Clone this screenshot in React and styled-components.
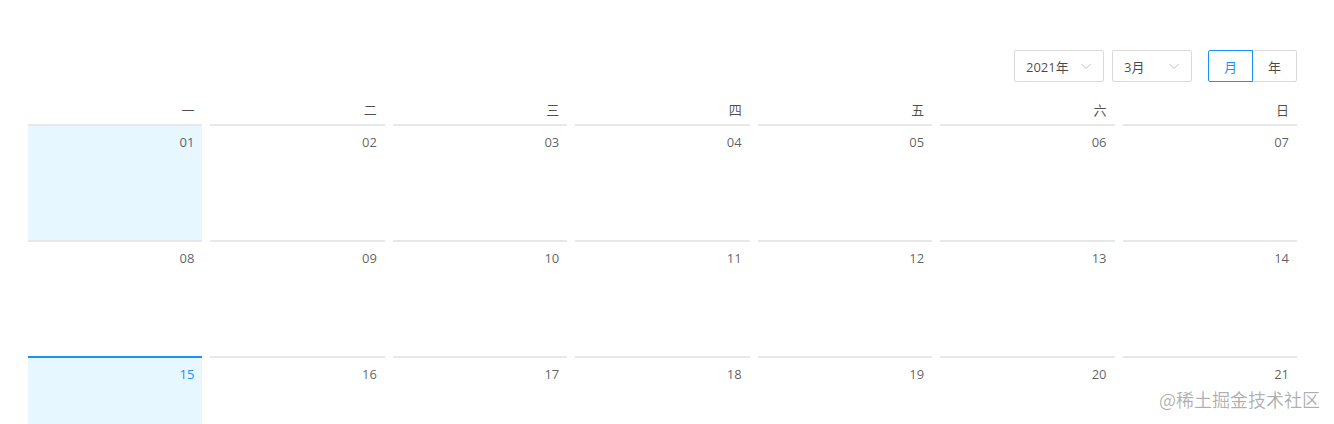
import React from "react";
import styled, { createGlobalStyle } from "styled-components";

const Global = createGlobalStyle`
  html, body { margin: 0; padding: 0; background: #fff; overflow: hidden; }
  body {
    font-family: "Open Sans", "Noto Sans CJK SC", sans-serif;
    font-size: 14px;
    color: rgba(0,0,0,0.85);
  }
`;

const Page = styled.div`
  position: relative;
  height: 424px;
  overflow: hidden;
  padding: 38px 33px 0 24px;
  box-sizing: border-box;
`;

const Header = styled.div`
  display: flex;
  justify-content: flex-end;
  align-items: center;
  padding: 12px 4px 12px 0;
`;

const Select = styled.div`
  box-sizing: border-box;
  width: ${(p) => p.w}px;
  height: 32px;
  margin-left: ${(p) => p.ml || 0}px;
  border: 1px solid #d9d9d9;
  border-radius: 2px;
  display: flex;
  align-items: center;
  justify-content: space-between;
  padding: 0 11px;
  font-size: 13px;
  color: rgba(0,0,0,0.72);
`;

const Arrow = () => (
  <svg width="12" height="12" viewBox="0 0 12 12" fill="none">
    <path d="M1.5 4 L6 8.5 L10.5 4" stroke="#bfbfbf" strokeWidth="1" />
  </svg>
);

const Radio = styled.div`
  display: flex;
  margin-left: 16px;
`;

const RadioBtn = styled.div`
  box-sizing: border-box;
  width: 45px;
  height: 32px;
  display: flex;
  align-items: center;
  justify-content: center;
  font-size: 13px;
  border: 1px solid ${(p) => (p.active ? "#1890ff" : "#d9d9d9")};
  color: ${(p) => (p.active ? "#1890ff" : "rgba(0,0,0,0.72)")};
  border-radius: ${(p) => (p.first ? "2px 0 0 2px" : "0 2px 2px 0")};
  margin-left: ${(p) => (p.first ? 0 : -1)}px;
  position: relative;
  z-index: ${(p) => (p.active ? 1 : 0)};
`;

const Grid = styled.div`
  display: grid;
  grid-template-columns: repeat(7, 1fr);
  padding-top: 7px;
`;

const WeekDay = styled.div`
  text-align: right;
  padding: 0 12px 5px 0;
  line-height: 18px;
  font-size: 13px;
  color: rgba(0,0,0,0.7);
`;

const Cell = styled.div`
  margin: 0 4px;
  padding: 4px 8px 0;
  border-top: 2px solid ${(p) => (p.today ? "#1890ff" : "#e8e8e8")};
  background: ${(p) => (p.highlight ? "#e6f7ff" : "transparent")};
  height: 110px;
`;

const Value = styled.div`
  text-align: right;
  line-height: 24px;
  font-size: 13px;
  color: ${(p) => (p.selected ? "#1890ff" : "rgba(0,0,0,0.65)")};
`;

const Watermark = styled.div`
  position: absolute;
  right: 14px;
  top: 386px;
  font-size: 18px;
  color: rgba(0,0,0,0.32);
  font-family: "Noto Sans CJK SC", sans-serif;
`;

const weeks = ["一", "二", "三", "四", "五", "六", "日"];

export default function App() {
  const days = [];
  for (let i = 1; i <= 21; i++) days.push(i);
  return (
    <Page>
      <Global />
      <Header>
        <Select w={90}>
          <span>2021年</span>
          <Arrow />
        </Select>
        <Select w={80} ml={8}>
          <span>3月</span>
          <Arrow />
        </Select>
        <Radio>
          <RadioBtn first active>月</RadioBtn>
          <RadioBtn>年</RadioBtn>
        </Radio>
      </Header>
      <Grid>
        {weeks.map((w) => (
          <WeekDay key={w}>{w}</WeekDay>
        ))}
        {days.map((d) => (
          <Cell key={d} today={d === 15} highlight={d === 1 || d === 15}>
            <Value selected={d === 15}>{String(d).padStart(2, "0")}</Value>
          </Cell>
        ))}
      </Grid>
      <Watermark>@稀土掘金技术社区</Watermark>
    </Page>
  );
}
